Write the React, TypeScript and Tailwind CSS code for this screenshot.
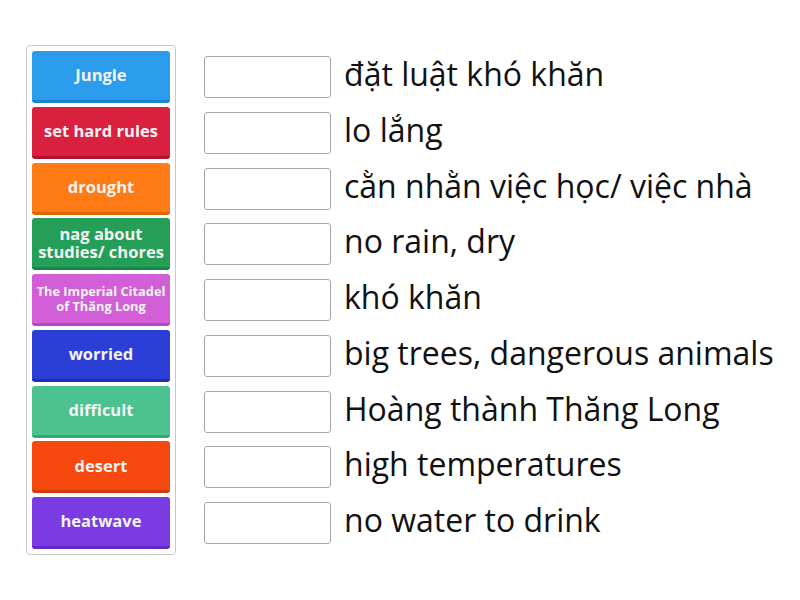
import React from "react";

interface Tile {
  label: string;
  color: string;
  size: string;
}

const tiles: Tile[] = [
  { label: "Jungle", color: "bg-[#2b9cec] border-[#1d84cf]", size: "text-[16.5px]" },
  { label: "set hard rules", color: "bg-[#d9203f] border-[#b3132e]", size: "text-[16.5px]" },
  { label: "drought", color: "bg-[#ff7b15] border-[#e0650a]", size: "text-[16.5px]" },
  { label: "nag about studies/ chores", color: "bg-[#259e57] border-[#1b8346]", size: "text-[16.5px]" },
  { label: "The Imperial Citadel of Thăng Long", color: "bg-[#d25fd8] border-[#b848bf]", size: "text-[12.8px]" },
  { label: "worried", color: "bg-[#2b3fd6] border-[#1e2fb5]", size: "text-[16.5px]" },
  { label: "difficult", color: "bg-[#4bc28f] border-[#36a877]", size: "text-[16.5px]" },
  { label: "desert", color: "bg-[#f5480f] border-[#d13b08]", size: "text-[16.5px]" },
  { label: "heatwave", color: "bg-[#7b3be2] border-[#6326c9]", size: "text-[16.5px]" },
];

const answers = [
  "đặt luật khó khăn",
  "lo lắng",
  "cằn nhằn việc học/ việc nhà",
  "no rain, dry",
  "khó khăn",
  "big trees, dangerous animals",
  "Hoàng thành Thăng Long",
  "high temperatures",
  "no water to drink",
];

const App = () => {
  return (
    <div
      className="w-[800px] h-[600px] bg-white flex items-start pt-[45px] pl-[26px]"
      style={{ fontFamily: '"Open Sans", "Noto Sans", sans-serif' }}
    >
      <div className="w-[150px] border border-[#c8c8c8] rounded-[4px] px-[5px] py-[5px] flex flex-col gap-[3.75px]">
        {tiles.map((t) => (
          <div
            key={t.label}
            className={`h-[52px] rounded-[3px] border-b-[3px] flex items-center justify-center px-[2px] text-center text-[#f4f4f4] font-bold leading-[1.1] ${t.color} ${t.size}`}
          >
            {t.label}
          </div>
        ))}
      </div>
      <div className="ml-[28px] mt-[11px] flex flex-col gap-[13.75px]">
        {answers.map((a) => (
          <div key={a} className="h-[42px] flex items-center">
            <div className="w-[127px] h-[42px] shrink-0 border border-[#a8a8a8] rounded-[3px] bg-white" />
            <span className="ml-[13px] -mt-[6px] text-[32px] leading-none text-[#111] whitespace-nowrap">{a}</span>
          </div>
        ))}
      </div>
    </div>
  );
};

export default App;
